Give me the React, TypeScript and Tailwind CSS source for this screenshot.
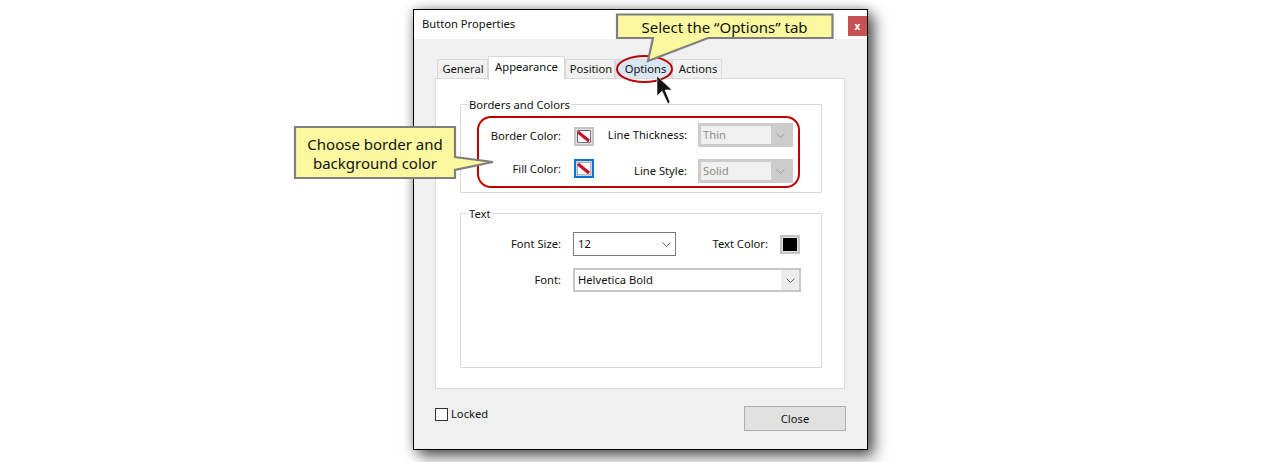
const font = { fontFamily: '"Noto Sans", "Open Sans", sans-serif' };
const label = "text-[11.2px]";

function Chevron({ color = "#606060" }: { color?: string }) {
  return (
    <svg width="9" height="5" viewBox="0 0 9 5" fill="none">
      <polyline points="0.5,0.5 4.5,4.5 8.5,0.5" stroke={color} strokeWidth="1" />
    </svg>
  );
}

function Swatch({ focus = false }: { focus?: boolean }) {
  return (
    <div className={focus ? "w-[20px] h-[19px] border-2 border-[#0078d7] bg-[#d0d0d0] p-px" : "w-[20px] h-[19px] border-2 border-[#c4c4c4] bg-[#e1e1e1] p-px"}>
      <svg width="14" height="13" viewBox="0 0 14 13" className="block">
        <rect x="0" y="0" width="14" height="13" fill="#fff" />
        <path d="M0.5 12.5V0.5H13.5" fill="none" stroke="#666" strokeWidth="1" strokeDasharray={focus ? "1 1" : undefined} />
        <path d="M0.5 12.5H13.5V0.5" fill="none" stroke="#777" strokeWidth="1" strokeDasharray={focus ? "1 1" : undefined} />
        <line x1="1" y1="2" x2="12" y2="11" stroke="#c8102e" strokeWidth="3.2" />
      </svg>
    </div>
  );
}

function DisabledSelect({ value }: { value: string }) {
  return (
    <div className="w-[95px] h-[24px] border-[3px] border-[#cccccc] bg-[#f0f0f0] flex items-center text-[#8a8a8a]">
      <span className="pl-[2px] flex-1">{value}</span>
      <div className="w-[19px] h-full bg-[#cccccc] flex items-center justify-center">
        <Chevron color="#a0a0a0" />
      </div>
    </div>
  );
}

function Tab({ label, active, hot, w, shift }: { label: string; active?: boolean; hot?: boolean; w: string; shift?: string }) {
  if (active) {
    return (
      <div className={`${w} h-[24px] -mb-px relative bg-white border border-b-0 border-[#d9d9d9] flex items-center justify-center pb-[3px]`}>
        {label}
      </div>
    );
  }
  return (
    <div className={`${w} h-[20px] border border-b-0 border-[#d9d9d9] flex items-center justify-center ${shift ?? ""} ${hot ? "bg-[#d8e6f5]" : "bg-[#f0f0f0]"}`}>
      {label}
    </div>
  );
}

export default function App() {
  return (
    <div className={`w-[1279px] h-[462px] bg-white overflow-hidden relative ${label} text-[#111] pl-[413px] pt-[9px]`} style={font}>
      <div className="w-[455px] h-[441px] border border-black bg-[#f0f0f0] shadow-[6px_6px_14px_rgba(0,0,0,0.65),0_0_10px_rgba(0,0,0,0.25)] flex flex-col">
        <div className="h-[29px] bg-white flex items-start justify-between pl-[8px] shrink-0">
          <span className="mt-[6px]">Button Properties</span>
          <div className="w-[19px] h-[20px] mt-[6px] bg-[#c75050] text-white text-[10px] font-bold flex items-center justify-center">x</div>
        </div>

        <div className="flex-1 pl-[21px] pt-[17px] flex flex-col">
          <div className="flex items-end pl-[2px] h-[23px]">
            <Tab label="General" w="w-[51px]" shift="pl-px" />
            <Tab label="Appearance" active w="w-[77px]" />
            <Tab label="Position" w="w-[50px]" shift="pl-[2px]" />
            <Tab label="Options" hot w="w-[57px]" shift="pl-[4px]" />
            <Tab label="Actions" w="w-[50px]" shift="pl-[2px]" />
          </div>

          <div className="w-[410px] h-[311px] -mt-px bg-white border border-[#d9d9d9] pl-[24px] pt-[25px]">
            <div className="w-[362px] h-[89px] border border-[#d9d9d9] relative pt-[18px]">
              <span className="absolute -top-[8px] left-[7px] bg-white px-[1px]">Borders and Colors</span>
              <div className="flex items-center h-[24px]">
                <span className="w-[100px] text-right mt-[3px]">Border Color:</span>
                <div className="ml-[13px] mt-[2px]"><Swatch /></div>
                <span className="w-[93px] text-right">Line Thickness:</span>
                <div className="ml-[11px]"><DisabledSelect value="Thin" /></div>
              </div>
              <div className="flex items-center h-[24px] mt-[12px]">
                <span className="w-[100px] text-right -mt-[3px]">Fill Color:</span>
                <div className="ml-[13px] -mt-[5px]"><Swatch focus /></div>
                <span className="w-[93px] text-right">Line Style:</span>
                <div className="ml-[11px]"><DisabledSelect value="Solid" /></div>
              </div>
            </div>

            <div className="w-[362px] h-[155px] mt-[20px] border border-[#d9d9d9] relative pt-[18px]">
              <span className="absolute -top-[8px] left-[7px] bg-white px-[1px]">Text</span>
              <div className="flex items-center h-[24px]">
                <span className="w-[100px] text-right">Font Size:</span>
                <div className="ml-[12px] w-[103px] h-[24px] border border-[#7a7a7a] bg-white flex items-center justify-between pl-[4px] pr-[4px]">
                  <span>12</span>
                  <Chevron />
                </div>
                <span className="w-[92px] text-right">Text Color:</span>
                <div className="ml-[12px] w-[20px] h-[19px] border-2 border-[#c4c4c4] p-[1px] bg-[#e1e1e1]">
                  <div className="w-full h-full bg-black" />
                </div>
              </div>
              <div className="flex items-center h-[24px] mt-[12px]">
                <span className="w-[100px] text-right">Font:</span>
                <div className="ml-[12px] w-[228px] h-[24px] border-2 border-[#c8c8c8] bg-white flex items-center">
                  <span className="flex-1 pl-[3px]">Helvetica Bold</span>
                  <div className="w-[18px] h-full bg-[#ececec] flex items-center justify-center"><Chevron /></div>
                </div>
              </div>
            </div>
          </div>

          <div className="flex justify-between items-start w-[411px] mt-[18px]">
            <div className="flex items-center gap-[3px] -mt-px">
              <div className="w-[13px] h-[13px] border border-[#333] bg-white" />
              <span>Locked</span>
            </div>
            <button className="w-[102px] h-[25px] pt-[2px] bg-[#e1e1e1] border border-[#adadad] -mt-px">Close</button>
          </div>
        </div>
      </div>

      {/* Annotation: red outline round the colour controls */}
      <div className="absolute left-[477px] top-[116px] w-[323px] h-[72px] border-2 border-[#c00000] rounded-[14px]" />

      {/* Annotation: ellipse round the Options tab */}
      <svg className="absolute left-[615px] top-[53px]" width="60" height="32">
        <ellipse cx="29.5" cy="16" rx="27.5" ry="13" fill="none" stroke="#c00000" strokeWidth="2" />
      </svg>

      {/* Annotation: callout over the tab */}
      <svg className="absolute left-[610px] top-[10px]" width="230" height="56">
        <path d="M7 4.5H222.5V28H98L38 51L43 28H7Z" fill="#fbf8a0" stroke="#7f7f7f" strokeWidth="2.2" />
      </svg>
      <span className="absolute left-[616px] top-[14px] w-[217px] h-[25px] text-center text-[15px] leading-[26px] text-[#111]">
        Select the “Options” tab
      </span>

      {/* Annotation: callout over the colour controls */}
      <svg className="absolute left-[290px] top-[122px]" width="208" height="62">
        <path d="M5 5H165V35L203 40L165 48V56H5Z" fill="#fbf8a0" stroke="#7f7f7f" strokeWidth="2.2" />
      </svg>
      <div className="absolute left-[295px] top-[135px] w-[160px] text-center text-[15px] leading-[19px] text-[#111]">
        Choose border and<br />background color
      </div>

      {/* Mouse pointer */}
      <svg className="absolute left-[654px] top-[75px]" width="20" height="31" viewBox="0 0 20 31">
        <path d="M3 1V21L8 16L14 29L16 27L11 15L18 15Z" fill="#111" stroke="#fff" strokeWidth="0.6" />
      </svg>
    </div>
  );
}
